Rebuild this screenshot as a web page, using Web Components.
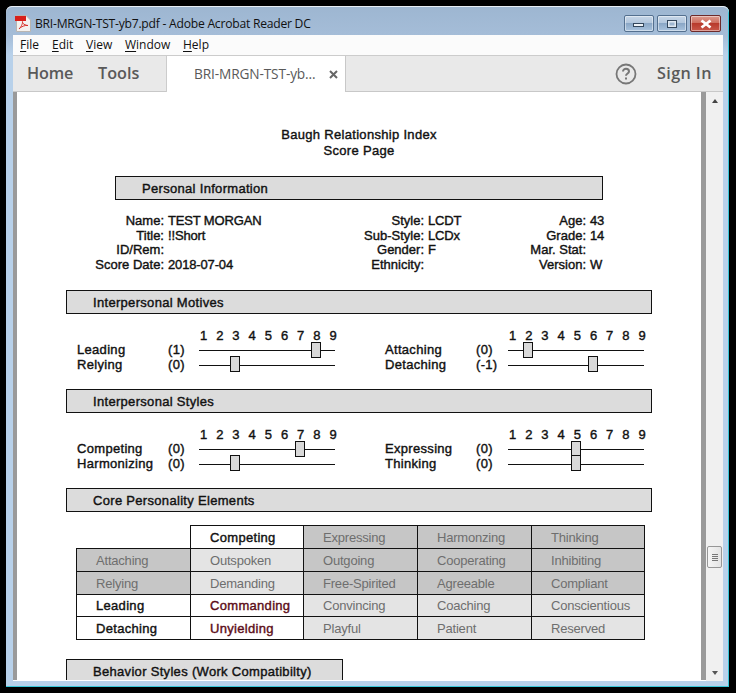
<!DOCTYPE html>
<html>
<head>
<meta charset="utf-8">
<title>BRI-MRGN-TST-yb7.pdf - Adobe Acrobat Reader DC</title>
<style>
  html, body { margin: 0; height: 693px; background: #000; overflow: hidden; }
</style>
</head>
<body>
<reader-window>
  <reader-page></reader-page>
</reader-window>

<script>
// Ventana principal con marco estilo Windows 7
class ReaderWindow extends HTMLElement {
    constructor() {
        super();
        this.attachShadow({ mode: 'open' }).innerHTML = `
            <style>
                :host { display: flex; flex-direction: column; width: 723px; height: 681px; margin: 6px 0 0 6px;
                    box-sizing: border-box; padding: 1px 6px 6px 7px; border-radius: 6px 6px 0 0;
                    background: linear-gradient(#9db6d1 0, #a5bdd8 30px, #b8d1ea 49px);
                    box-shadow: inset 0 1px 0 #e8eef5, inset -1px -1px 0 #39c6d8; }
                .main { flex: 1; display: flex; min-height: 0; background: #fff; }
            </style>
            <title-bar></title-bar>
            <menu-bar></menu-bar>
            <tool-bar></tool-bar>
            <div class="main">
                <slot></slot>
                <scroll-bar></scroll-bar>
            </div>
        `;
    }
}

class TitleBar extends HTMLElement {
    constructor() {
        super();
        this.attachShadow({ mode: 'open' }).innerHTML = `
            <style>
                :host { display: flex; align-items: flex-start; height: 28px; font: 12.150px "Open Sans", sans-serif; color: #111; }
                svg { margin: 8px 4px 0 2px; }
                .title { margin-top: 7px; line-height: 20px; white-space: nowrap; flex: 1; letter-spacing: -0.02em; }
                .btn { width: 28px; height: 15px; margin: 8px 0 0 3px; border: 1px solid #54708f; border-radius: 2px; display: flex; align-items: center; justify-content: center;
                    background: linear-gradient(#c6d6e8 0, #b3c7dd 45%, #8aa7c6 50%, #a9c3de 100%); box-shadow: inset 0 0 0 1px rgba(255,255,255,.45); }
                .btn.close { width: 29px; border-color: #6d2a2a; margin-right: 2px; background: linear-gradient(#dc9a8e 0, #cf6f60 45%, #b83a2c 50%, #c9584a 100%); }
                .btn svg { margin: 0; }
            </style>
            <svg width="16" height="17" viewBox="0 0 16 17">
                <path d="M1.500 .5H11L15.500 5V16.500H1.500Z" fill="#f4f1ee" stroke="#b9b5b1"/>
                <rect x="0" y="1" width="11" height="5" fill="#d8201a"/>
                <path d="M4 14C7 11 8 7 7.500 6.500C7 7 8 10 13 10.500C10 10 6 11.500 4 14Z" fill="none" stroke="#d8302a"/>
            </svg>
            <span class="title">BRI-MRGN-TST-yb7.pdf - Adobe Acrobat Reader DC</span>
            <div class="btn"><svg width="14" height="8" viewBox="0 0 14 8"><rect x="1.500" y="3.500" width="10" height="3" fill="#eef3f8" stroke="#33475c"/></svg></div>
            <div class="btn"><svg width="12" height="10" viewBox="0 0 12 10"><rect x="1.500" y="1.500" width="9" height="7" fill="#dfe8f1" stroke="#33475c"/><rect x="3.500" y="3.500" width="5" height="3" fill="#9db6d1" stroke="none"/></svg></div>
            <div class="btn close"><svg width="14" height="10" viewBox="0 0 14 10"><path d="M2.500 1.500L11.500 8.500M11.500 1.500L2.500 8.500" stroke="#fff" stroke-width="2.800"/></svg></div>
        `;
    }
}

class MenuBar extends HTMLElement {
    constructor() {
        super();
        this.attachShadow({ mode: 'open' }).innerHTML = `
            <style>
                :host { display: flex; height: 20px; padding-left: 7px; background: #fbfbfb; font: 12px/20px "Open Sans", sans-serif; color: #111; }
                span { display: block; }
                u { text-underline-offset: 2px; }
                .file { width: 32px; }
                .edit { width: 34px; }
                .view { width: 39px; }
                .window { width: 58px; }
            </style>
            <span class="file"><u>F</u>ile</span><span class="edit"><u>E</u>dit</span><span class="view"><u>V</u>iew</span><span class="window"><u>W</u>indow</span><span><u>H</u>elp</span>
        `;
    }
}

class ToolBar extends HTMLElement {
    constructor() {
        super();
        this.attachShadow({ mode: 'open' }).innerHTML = `
            <style>
                :host { display: flex; align-items: stretch; height: 37px; box-sizing: border-box; background: #e9e9e9;
                    border-top: 1px solid #ccc; border-bottom: 1px solid #c8c8c8; font: 600 16.200px "Open Sans", sans-serif; color: #595959; line-height: 35px; }
                .nav { margin-left: 14px; width: 71px; letter-spacing: -.2px; }
                .nav + .nav { margin-left: 0; width: 68px; letter-spacing: 0; }
                .tab { display: flex; width: 180px; box-sizing: border-box; margin-bottom: -1px; padding-left: 27px; background: #fff;
                    border-left: 1px solid #ccc; border-right: 1px solid #c8c8c8; font-weight: 400; font-size: 13.700px; }
                .tab span { width: 135px; white-space: nowrap; letter-spacing: -0.01em; }
                .tab svg { align-self: center; }
                .help { margin: 7px 0 0 269px; }
                .sign { margin-left: 20px; white-space: nowrap; letter-spacing: .4px; }
            </style>
            <div class="nav">Home</div><div class="nav">Tools</div>
            <div class="tab"><span>BRI-MRGN-TST-yb...</span>
                <svg width="9" height="9" viewBox="0 0 9 9"><path d="M1 1L8 8M8 1L1 8" stroke="#666" stroke-width="2"/></svg>
            </div>
            <svg class="help" width="22" height="22" viewBox="0 0 22 22">
                <circle cx="11" cy="11" r="9.500" fill="none" stroke="#777" stroke-width="1.800"/>
                <path d="M8 8.500C8 4.800 14 5 14 8.500C14 10.500 11 10.500 11 12.800" fill="none" stroke="#777" stroke-width="2"/>
                <rect x="10" y="14.500" width="2" height="2" fill="#777"/>
            </svg>
            <div class="sign">Sign In</div>
        `;
    }
}

class ScrollBar extends HTMLElement {
    constructor() {
        super();
        this.attachShadow({ mode: 'open' }).innerHTML = `
            <style>
                :host { display: block; position: relative; flex: none; width: 17px; background: #f0f0f0; }
                .up, .down { position: absolute; left: 6px; width: 0; height: 0; border: solid transparent; border-width: 4px 3px; }
                .up { top: 3px; border-bottom-color: #444; }
                .down { bottom: 2px; border-top-color: #555; }
                .thumb { position: absolute; left: 1px; top: 454px; width: 13px; height: 20px; border: 1px solid #979797; border-radius: 2px;
                    background: linear-gradient(90deg, #f5f5f5, #e4e4e4); display: flex; flex-direction: column; align-items: center; justify-content: center; gap: 1px; }
                .thumb i { display: block; width: 6px; height: 1px; background: #777; }
            </style>
            <div class="up"></div>
            <div class="thumb"><i></i><i></i><i></i><i></i></div>
            <div class="down"></div>
        `;
    }
}

// Pagina del PDF, recortada por abajo como en el visor
class ReaderPage extends HTMLElement {
    constructor() {
        super();
        this.attachShadow({ mode: 'open' }).innerHTML = `
            <style>
                :host { display: block; flex: 1; min-width: 0; height: 588px; overflow: hidden; box-sizing: border-box;
                    border-left: 4px solid #9a9a9a; border-right: 5px solid #9a9a9a; background: #fff;
                    font: 13px/14.670px "Liberation Sans", Arial, sans-serif; letter-spacing: .31px; color: #111; -webkit-text-stroke: .4px currentColor; }
                .head { padding-top: 35px; text-align: center; line-height: 16px; }
                section-bar { margin-left: 49px; width: 586px; }
                .personal { margin: 17px 0 0 98px; width: 488px; }
                .motives { margin-top: 17px; }
                .behavior { margin-top: 19px; width: 277px; height: 32px; }
            </style>
            <div class="head">Baugh Relationship Index<br>Score Page</div>
            <section-bar class="personal">Personal Information</section-bar>
            <info-grid></info-grid>
            <section-bar class="motives">Interpersonal Motives</section-bar>
            <score-block>
                <score-column>
                    <score-row score="(1)" value="8">Leading</score-row>
                    <score-row score="(0)" value="3">Relying</score-row>
                </score-column>
                <score-column>
                    <score-row score="(0)" value="2">Attaching</score-row>
                    <score-row score="(-1)" value="6">Detaching</score-row>
                </score-column>
            </score-block>
            <section-bar>Interpersonal Styles</section-bar>
            <score-block>
                <score-column>
                    <score-row score="(0)" value="7">Competing</score-row>
                    <score-row score="(0)" value="3">Harmonizing</score-row>
                </score-column>
                <score-column>
                    <score-row score="(0)" value="5">Expressing</score-row>
                    <score-row score="(0)" value="5">Thinking</score-row>
                </score-column>
            </score-block>
            <section-bar>Core Personality Elements</section-bar>
            <trait-grid></trait-grid>
            <section-bar class="behavior">Behavior Styles (Work Compatibilty)</section-bar>
        `;
    }
}

class SectionBar extends HTMLElement {
    constructor() {
        super();
        this.attachShadow({ mode: 'open' }).innerHTML = `
            <style>
                :host { display: block; height: 24px; box-sizing: border-box; padding-left: 26px; border: 1px solid #111;
                    background: #dcdcdc; line-height: 23px; white-space: nowrap; }
            </style>
            <slot></slot>
        `;
    }
}

class InfoGrid extends HTMLElement {
    constructor() {
        super();
        const filas = [
            ['Name:', 'TEST MORGAN', 'Style:', 'LCDT', 'Age:', '43'],
            ['Title:', '!!Short', 'Sub-Style:', 'LCDx', 'Grade:', '14'],
            ['ID/Rem:', '', 'Gender:', 'F', 'Mar. Stat:', ''],
            ['Score Date:', '2018-07-04', 'Ethnicity:', '', 'Version:', 'W']
        ];
        const celdas = filas.map(f => f.map((t, i) => `<span class="${i % 2 ? 'v' : 'k'}">${t}</span>`).join('')).join('');
        this.attachShadow({ mode: 'open' }).innerHTML = `
            <style>
                :host { display: grid; grid-template-columns: 147px 136px 124px 64px 98px 1fr; margin-top: 14px; }
                span { white-space: nowrap; }
                .k { text-align: right; letter-spacing: 0; }
                .v { padding-left: 4px; letter-spacing: -.15px; }
            </style>
        ` + celdas;
    }
}

// Bloque de dos columnas de escalas
class ScoreBlock extends HTMLElement {
    constructor() {
        super();
        this.attachShadow({ mode: 'open' }).innerHTML = `
            <style>
                :host { display: grid; grid-template-columns: 258px 259px; column-gap: 50px; padding: 14px 0 16px 60px; }
            </style>
            <slot></slot>
        `;
    }
}

class ScoreColumn extends HTMLElement {
    constructor() {
        super();
        const numeros = [1, 2, 3, 4, 5, 6, 7, 8, 9].map(n => `<span>${n}</span>`).join('');
        this.attachShadow({ mode: 'open' }).innerHTML = `
            <style>
                :host { display: block; --paren: 31px; }
                :host(:last-child) { --paren: 32px; }
                .nums { display: grid; grid-template-columns: repeat(9, 16.200px); height: 15px; line-height: 15px; text-align: center;
                    margin-left: calc(87.500px + var(--paren)); letter-spacing: 0; }
            </style>
            <div class="nums">${numeros}</div>
            <slot></slot>
        `;
    }
}

class ScoreRow extends HTMLElement {
    constructor() {
        super();
        const valor = Number(this.getAttribute('value'));
        this.attachShadow({ mode: 'open' }).innerHTML = `
            <style>
                :host { display: grid; grid-template-columns: 91px var(--paren) 136px; height: 15px; line-height: 13px; white-space: nowrap; }
                .track { position: relative; height: 15px; background: linear-gradient(#111, #111) 0 7px / 100% 1px no-repeat; }
                .thumb { position: absolute; top: -1px; width: 10px; height: 16px; box-sizing: border-box; border: 1px solid #111; background: #d9d9d9; }
                :host(:last-child) .thumb { top: -2px; }
            </style>
            <span><slot></slot></span>
            <span>${this.getAttribute('score')}</span>
            <div class="track"><div class="thumb" style="left: ${-1 + (valor - 1) * 16.1}px"></div></div>
        `;
    }
}

// Tabla de elementos de personalidad
class TraitGrid extends HTMLElement {
    constructor() {
        super();
        const filas = [
            [['', 'blank'], ['Competing', 'w b'], ['Expressing', 'd'], ['Harmonzing', 'd'], ['Thinking', 'd']],
            [['Attaching', 'd'], ['Outspoken', 'l'], ['Outgoing', 'd'], ['Cooperating', 'd'], ['Inhibiting', 'd']],
            [['Relying', 'd'], ['Demanding', 'l'], ['Free-Spirited', 'd'], ['Agreeable', 'd'], ['Compliant', 'd']],
            [['Leading', 'w b'], ['Commanding', 'w r'], ['Convincing', 'l'], ['Coaching', 'l'], ['Conscientious', 'l']],
            [['Detaching', 'w b'], ['Unyielding', 'w r'], ['Playful', 'l'], ['Patient', 'l'], ['Reserved', 'l']]
        ];
        const celdas = filas.map((f, y) => f.map(([t, c], x) => {
            const top = y === 0 ? ' top' : '';
            const left = x === 0 ? ' left' : '';
            return `<div class="${c}${top}${left}">${t}</div>`;
        }).join('')).join('');
        this.attachShadow({ mode: 'open' }).innerHTML = `
            <style>
                :host { display: grid; grid-template-columns: 115px 113px 114px 114px 113px; grid-template-rows: 24px 23px 23px 22px 23px;
                    width: 569px; margin: 13px 0 0 59px; }
                div { box-sizing: border-box; padding: 2.500px 0 0 19px; border-right: 1px solid #111; border-bottom: 1px solid #111; color: #6e6e6e;
                    display: flex; align-items: center; white-space: nowrap; letter-spacing: -.2px; -webkit-text-stroke: 0; }
                .top { border-top: 1px solid #111; }
                .left { border-left: 1px solid #111; }
                .blank { border-top: 0; border-left: 0; background: #fff; }
                .d { background: #c6c6c6; }
                .l { background: #e4e4e4; }
                .w { background: #fff; letter-spacing: .31px; -webkit-text-stroke: .4px currentColor; }
                .b { color: #111; }
                .r { color: #5c0d18; }
            </style>
        ` + celdas;
    }
}

customElements.define('reader-window', ReaderWindow);
customElements.define('title-bar', TitleBar);
customElements.define('menu-bar', MenuBar);
customElements.define('tool-bar', ToolBar);
customElements.define('scroll-bar', ScrollBar);
customElements.define('section-bar', SectionBar);
customElements.define('info-grid', InfoGrid);
customElements.define('score-block', ScoreBlock);
customElements.define('score-column', ScoreColumn);
customElements.define('score-row', ScoreRow);
customElements.define('trait-grid', TraitGrid);
customElements.define('reader-page', ReaderPage);
</script>
</body>
</html>
